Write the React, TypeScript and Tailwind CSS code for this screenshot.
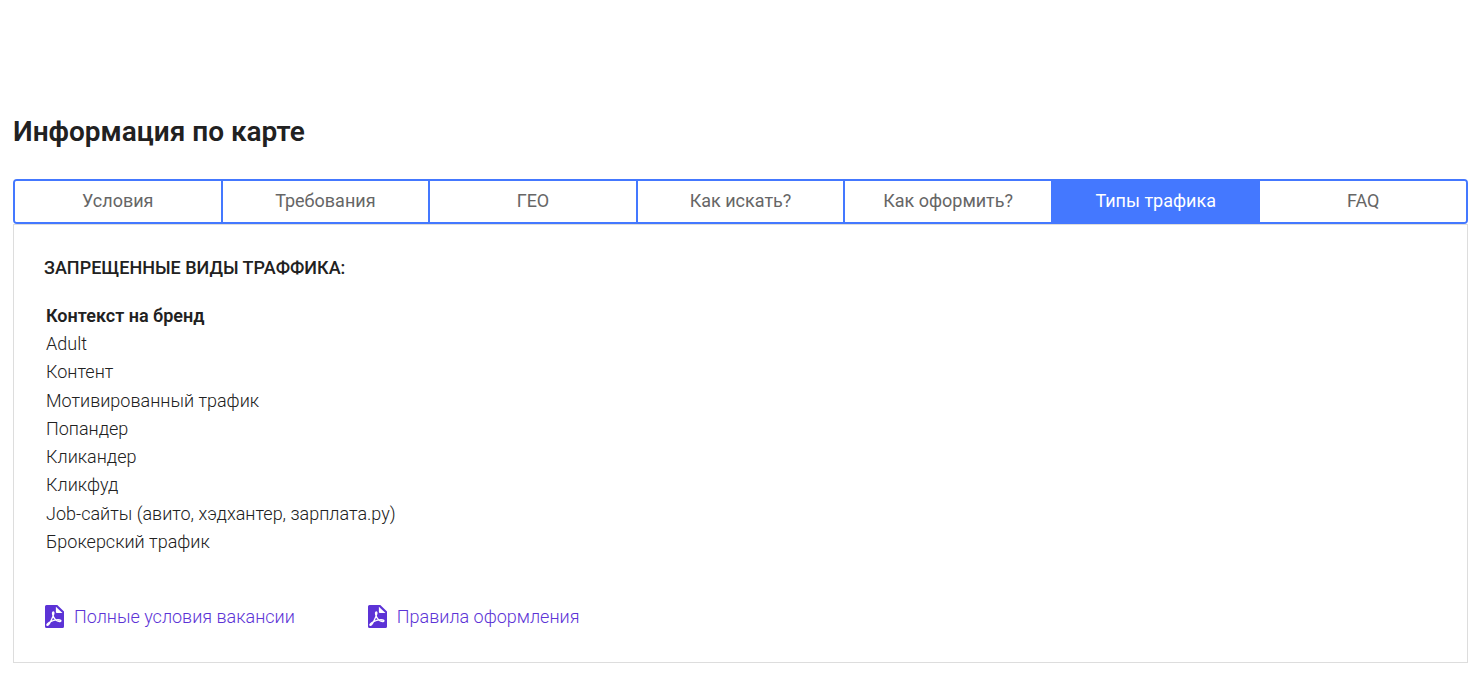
import { useState } from "react";

const tabs = [
  "Условия",
  "Требования",
  "ГЕО",
  "Как искать?",
  "Как оформить?",
  "Типы трафика",
  "FAQ",
];

const forbidden = [
  "Контекст на бренд",
  "Adult",
  "Контент",
  "Мотивированный трафик",
  "Попандер",
  "Кликандер",
  "Кликфуд",
  "Job-сайты (авито, хэдхантер, зарплата.ру)",
  "Брокерский трафик",
];

function PdfIcon() {
  return (
    <svg viewBox="-1 0 20 24" className="h-6 w-5 shrink-0" aria-hidden="true">
      <path
        fill="#5c33d6"
        d="M1.500 0h10.800L19 6.500V21.500a1.500 1.500 0 0 1-1.500 1.500H1.500a1.500 1.500 0 0 1-1.500-1.500v-20a1.500 1.500 0 0 1 1.500-1.500z"
      />
      <path fill="#fff" d="M10.900 1.800v5.300a1 1 0 0 0 1 1h5.600z" />
      <path
        fill="none"
        stroke="#fff"
        strokeWidth="1.3"
        strokeLinecap="round"
        strokeLinejoin="round"
        d="M8.300 6.800c-1 0-.9 1.700-.5 3.200.9 3 3.700 6 6.700 6.500 1.700.2 2-1.500.2-1.700-3.300-.4-7.200.6-10.400 2.500-2.500 1.600-2.800 2.900-2 3 1 .1 2.500-2.100 4-5.200 1.400-2.900 2.400-5.300 2.600-6.900 0-.9-.2-1.400-.6-1.400z"
      />
    </svg>
  );
}

export default function App() {
  const [active, setActive] = useState(5);

  return (
    <main className="bg-white pt-28 pr-2 pb-6 pl-[13px] font-['Roboto',sans-serif] text-lg text-[#212121]">
      <h1 className="text-[28px] leading-10 font-semibold">Информация по карте</h1>

      <div
        role="tablist"
        className="mt-[27px] flex overflow-hidden rounded border-2 border-[#4478ff]"
      >
        {tabs.map((tab, i) => (
          <button
            key={tab}
            type="button"
            role="tab"
            id={`tab-${i}`}
            aria-selected={active === i}
            aria-controls="panel"
            onClick={() => setActive(i)}
            className={`h-[41px] flex-1 border-r-2 border-[#4478ff] pb-0.5 last:border-r-0 ${
              active === i ? "bg-[#4478ff] text-white" : "bg-white text-[#666666]"
            }`}
          >
            {tab}
          </button>
        ))}
      </div>

      <section
        id="panel"
        role="tabpanel"
        aria-labelledby={`tab-${active}`}
        className="border border-[#dddddd] px-[30px] pt-[29px] pb-[31px]"
      >
        <h2 className="leading-7 font-medium">ЗАПРЕЩЕННЫЕ ВИДЫ ТРАФФИКА:</h2>
        <ul className="mt-5 grid min-h-[254px] auto-rows-fr px-0.5 leading-7">
          {forbidden.map((item, i) => (
            <li key={item} className={i === 0 ? "font-semibold" : "font-light"}>
              {item}
            </li>
          ))}
        </ul>
        <div className="mt-[47px] flex gap-[72px] leading-7 font-light text-[#5c33d6]">
          <a href="#terms" className="flex items-center gap-2.5">
            <PdfIcon />
            Полные условия вакансии
          </a>
          <a href="#rules" className="flex items-center gap-2.5">
            <PdfIcon />
            Правила оформления
          </a>
        </div>
      </section>
    </main>
  );
}
